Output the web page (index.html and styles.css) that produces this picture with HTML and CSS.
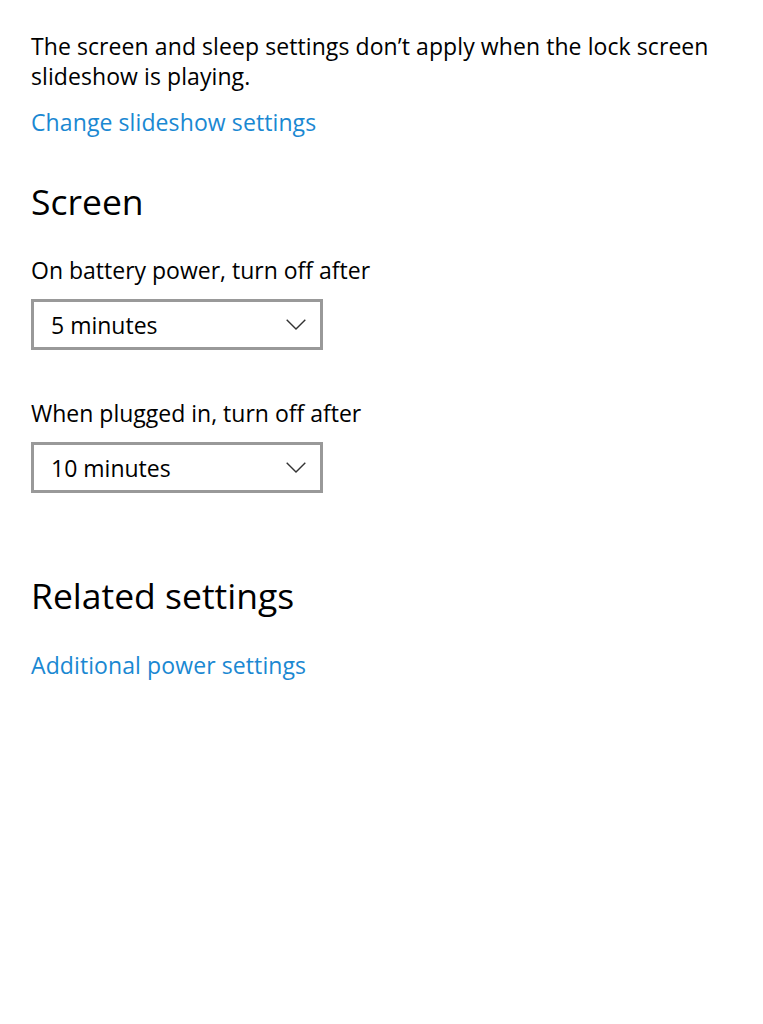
FILE: index.html
```html
<!DOCTYPE html>
<html lang="en">
<head>
<meta charset="utf-8">
<title>Power &amp; sleep</title>
<link rel="stylesheet" href="styles.css">
</head>
<body>
<main class="page">
  <p class="desc">The screen and sleep settings don’t apply when the lock screen slideshow is playing.</p>
  <a class="link link-first" href="#">Change slideshow settings</a>

  <h2 class="heading heading-screen">Screen</h2>

  <div class="label label-first">On battery power, turn off after</div>
  <div class="select">
    <span class="select-value">5 minutes</span>
    <svg class="chevron" width="20" height="11" viewBox="0 0 20 11" aria-hidden="true"><path d="M0.7 0.7 L10 10 L19.3 0.7" fill="none" stroke="#333" stroke-width="1.4"/></svg>
  </div>

  <div class="label label-second">When plugged in, turn off after</div>
  <div class="select">
    <span class="select-value">10 minutes</span>
    <svg class="chevron" width="20" height="11" viewBox="0 0 20 11" aria-hidden="true"><path d="M0.7 0.7 L10 10 L19.3 0.7" fill="none" stroke="#333" stroke-width="1.4"/></svg>
  </div>

  <h2 class="heading heading-related">Related settings</h2>
  <a class="link link-related" href="#">Additional power settings</a>
</main>
</body>
</html>
```
FILE: styles.css
```css
html, body {
  margin: 0;
  padding: 0;
  background: #ffffff;
}

body {
  font-family: "Open Sans", "Noto Sans", "Liberation Sans", sans-serif;
  color: #000000;
}

.page {
  display: flex;
  flex-direction: column;
  align-items: flex-start;
  padding: 31px 31px 40px 31px;
  width: 700px;
}

.desc {
  margin: 0;
  font-size: 23px;
  line-height: 30px;
  width: 700px;
  letter-spacing: 0.08px;
}

.link {
  display: block;
  color: #1a88d2;
  text-decoration: none;
  font-size: 23px;
  line-height: 30px;
  letter-spacing: 0.1px;
}

.link-first {
  margin-top: 16px;
}

.heading {
  margin: 0;
  font-weight: 400;
  font-size: 35.5px;
  line-height: 52px;
}

.heading-screen {
  margin-top: 38px;
}

.heading-related {
  margin-top: 76px;
}

.label {
  font-size: 23px;
  line-height: 30px;
}

.label-first {
  margin-top: 28px;
}

.label-second {
  margin-top: 48px;
}

.select {
  box-sizing: border-box;
  margin-top: 14px;
  width: 292px;
  height: 51px;
  border: 3px solid #999999;
  display: flex;
  align-items: center;
  justify-content: space-between;
  padding: 0 14px 0 17px;
}

.select-value {
  font-size: 23px;
  line-height: 30px;
}

.chevron {
  display: block;
}

.link-related {
  margin-top: 29px;
}
```
